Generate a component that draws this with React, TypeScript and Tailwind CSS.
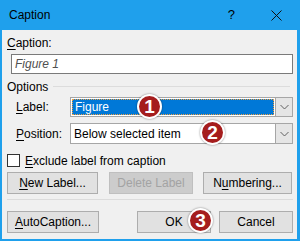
import React from 'react';

const font = { fontFamily: '"Liberation Sans", Arial, sans-serif' };

const Key: React.FC<{ children: React.ReactNode }> = ({ children }) => (
  <span className="underline underline-offset-2">{children}</span>
);

const Button: React.FC<{ className?: string; disabled?: boolean; children: React.ReactNode }> = ({
  className = '',
  disabled,
  children,
}) => (
  <div
    className={`h-[22px] flex items-center justify-center border text-[12px] ${
      disabled
        ? 'bg-[#cccccc] border-[#bfbfbf] text-[#a3a3a3]'
        : 'bg-[#e1e1e1] border-[#adadad] text-black'
    } ${className}`}
  >
    {children}
  </div>
);

const Chevron = () => (
  <svg width="9" height="6" viewBox="0 0 9 6" className="block">
    <path d="M0.5 1 L4.5 5 L8.5 1" fill="none" stroke="#606060" strokeWidth="1" />
  </svg>
);

const Badge: React.FC<{ n: number; className: string }> = ({ n, className }) => (
  <div
    className={`absolute w-[25px] h-[25px] rounded-full bg-[#a51d1d] border-2 border-white shadow-[0_0_2px_rgba(0,0,0,0.5)] flex items-center justify-center text-white font-bold text-[19px] leading-none ${className}`}
  >
    {n}
  </div>
);

export default function App() {
  return (
    <div className="relative w-[300px] h-[241px] bg-[#1fa0ec] flex flex-col overflow-hidden" style={font}>
      {/* title bar */}
      <div className="h-[30px] flex items-center pl-[9px] text-[12px] text-black">
        <span>Caption</span>
        <span className="ml-auto mr-[36px] text-[13px]">?</span>
        <svg width="11" height="11" viewBox="0 0 11 11" className="mr-[18px]">
          <path d="M0.5 0.5 L10.5 10.5 M10.5 0.5 L0.5 10.5" stroke="#111" strokeWidth="1" />
        </svg>
      </div>

      {/* body */}
      <div className="flex-1 ml-[2px] mr-[3px] mb-[2px] bg-[#f0f0f0] pl-[5px] pr-[4px] flex flex-col text-[12px] text-black">
        <div className="mt-[6px] h-[15px] leading-[15px]">
          <Key>C</Key>aption:
        </div>
        <div className="mt-[3px] ml-[4px] h-[20px] bg-white border border-[#7a7a7a] flex items-center pl-[3px] italic text-[#505050]">
          Figure 1
        </div>

        <div className="mt-[5px] h-[15px] flex items-center">
          <span>Options</span>
          <div className="ml-[5px] mr-[3px] flex-1 h-px bg-[#dcdcdc]" />
        </div>

        <div className="mt-[3px] h-[20px] flex items-center">
          <span className="ml-[9px] w-[54px]">
            <Key>L</Key>abel:
          </span>
          <div className="flex-1 h-[20px] border border-[#a6a6a6] bg-white flex">
            <div className="flex-1 m-[1px] bg-[#0078d7] border border-dotted border-[#f0a040] flex items-center pl-[2px] text-white">
              Figure
            </div>
            <div className="w-[17px] bg-[#e5e5e5] border-l border-[#a6a6a6] flex items-center justify-center">
              <Chevron />
            </div>
          </div>
        </div>

        <div className="mt-[6px] h-[21px] flex items-center">
          <span className="ml-[9px] w-[54px]">
            <Key>P</Key>osition:
          </span>
          <div className="flex-1 h-[21px] border border-[#a6a6a6] bg-white flex">
            <div className="flex-1 flex items-center pl-[3px]">Below selected item</div>
            <div className="w-[17px] bg-[#e5e5e5] border-l border-[#a6a6a6] flex items-center justify-center">
              <Chevron />
            </div>
          </div>
        </div>

        <div className="mt-[10px] h-[13px] flex items-center">
          <div className="w-[13px] h-[13px] bg-white border border-[#333333]" />
          <span className="ml-[5px]">
            <Key>E</Key>xclude label from caption
          </span>
        </div>

        <div className="mt-[5px] flex">
          <Button className="w-[91px]">
            <Key>N</Key>ew Label...
          </Button>
          <Button className="w-[84px] ml-[11px]" disabled>
            Delete Label
          </Button>
          <Button className="w-[89px] ml-[10px]">
            N<Key>u</Key>mbering...
          </Button>
        </div>

        <div className="mt-[5px] h-px bg-[#dcdcdc]" />

        <div className="mt-[11px] flex">
          <Button className="w-[92px]">
            <Key>A</Key>utoCaption...
          </Button>
          <Button className="w-[74px] ml-auto border-[#0078d7]">OK</Button>
          <Button className="w-[74px] ml-[8px]">Cancel</Button>
        </div>
      </div>

      <Badge n={1} className="left-[137px] top-[94px]" />
      <Badge n={2} className="left-[200px] top-[120px]" />
      <Badge n={3} className="left-[188px] top-[208px]" />
    </div>
  );
}
